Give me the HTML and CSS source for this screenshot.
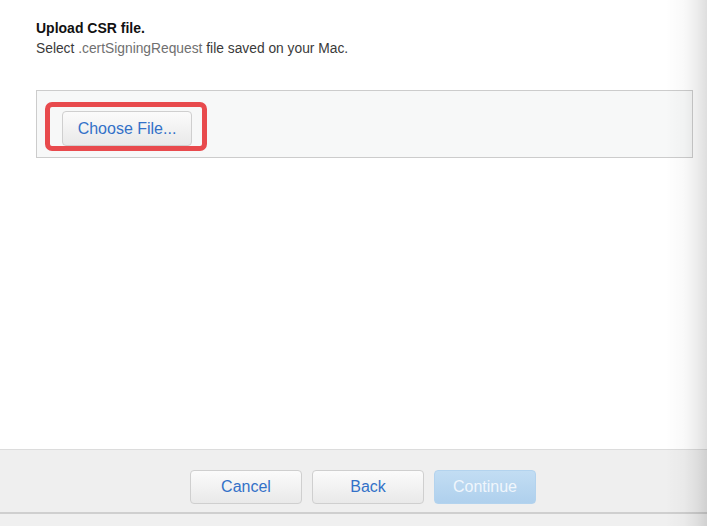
FILE: index.html
```html
<!DOCTYPE html>
<html>
<head>
<meta charset="utf-8">
<link rel="stylesheet" href="styles.css">
</head>
<body>
<div class="page">
  <div class="content">
    <h1 class="title">Upload CSR file.</h1>
    <p class="desc">Select <span class="ext">.certSigningRequest</span> file saved on your Mac.</p>
    <div class="dropbox">
      <div class="highlight">
        <button class="btn choose">Choose File...</button>
      </div>
    </div>
  </div>
  <div class="footer">
    <div class="actions">
      <button class="btn action cancel">Cancel</button>
      <button class="btn action back">Back</button>
      <button class="btn action continue">Continue</button>
    </div>
  </div>
  <div class="bottom-strip"></div>
  <div class="edge-shadow"></div>
</div>
</body>
</html>
```
FILE: styles.css
```css
html, body {
  margin: 0;
  padding: 0;
  background: #ffffff;
}
body {
  font-family: "Liberation Sans", Arial, sans-serif;
}
.page {
  position: relative;
  width: 707px;
  height: 526px;
  display: flex;
  flex-direction: column;
  overflow: hidden;
}
.content {
  flex: 1;
  padding: 20px 14px 0 36px;
}
.title {
  margin: 0;
  font-size: 14px;
  line-height: 17px;
  font-weight: bold;
  color: #111111;
}
.desc {
  margin: 3px 0 0 0;
  font-size: 13.8px;
  line-height: 17px;
  color: #3a3a3a;
}
.ext {
  color: #707070;
}
.dropbox {
  margin-top: 33px;
  border: 1px solid #cccccc;
  background: #f7f8f8;
  padding: 11px 8px 6px 8px;
  height: 49px;
}
.highlight {
  display: inline-block;
  box-sizing: border-box;
  width: 162px;
  height: 49px;
  border: 5px solid #e84a4d;
  border-radius: 7px;
  padding: 4px 10px 0 12px;
}
.btn {
  box-sizing: border-box;
  font-family: "Liberation Sans", Arial, sans-serif;
  font-size: 16px;
  color: #3371c8;
  border: 1px solid #cfcfcf;
  border-radius: 4px;
  background: linear-gradient(#fbfbfb, #e9e9e9);
  padding: 0;
  margin: 0;
  cursor: pointer;
}
.choose {
  display: block;
  width: 130px;
  height: 35px;
}
.footer {
  height: 62px;
  border-top: 1px solid #dcdcdc;
  border-bottom: 2px solid #cfcfcf;
  background: #efefef;
}
.actions {
  display: flex;
  gap: 10px;
  padding: 20px 0 0 190px;
}
.action {
  height: 34px;
  width: 112px;
}
.continue {
  width: 102px;
  color: #f0f6fc;
  border-color: #b3d3ee;
  background: linear-gradient(#c2ddf3, #afd0ed);
}
.bottom-strip {
  height: 12px;
  background: #f0f0f0;
}
.edge-shadow {
  position: absolute;
  top: 0;
  right: 0;
  width: 42px;
  height: 100%;
  pointer-events: none;
  background: linear-gradient(to right, rgba(0,0,0,0) 0%, rgba(0,0,0,0.025) 45%, rgba(0,0,0,0.07) 75%, rgba(0,0,0,0.13) 100%);
}
```
